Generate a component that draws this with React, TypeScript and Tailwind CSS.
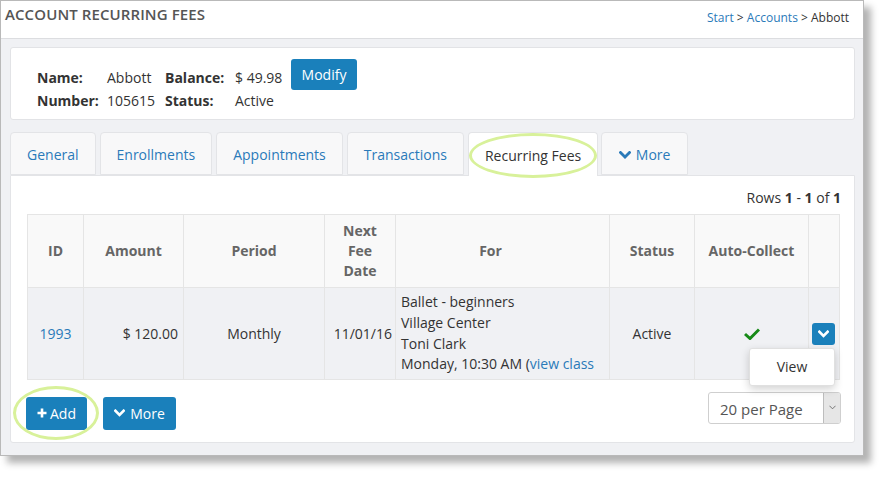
import React from "react";

const font = { fontFamily: '"Open Sans", "Liberation Sans", sans-serif' };

function Chevron({ className = "" }: { className?: string }) {
  return (
    <svg viewBox="0 0 12 8" className={className} fill="none">
      <path d="M1.5 1.5 L6 6 L10.5 1.5" stroke="currentColor" strokeWidth="2.8" strokeLinecap="square" />
    </svg>
  );
}

const tabs = ["General", "Enrollments", "Appointments", "Transactions", "Recurring Fees"];

export default function App() {
  return (
    <div className="w-[890px] h-[481px] bg-white text-[14px] text-[#333]" style={font}>
      <div className="w-[864px] h-[456px] border border-[#b9b9b9] flex flex-col shadow-[7px_7px_7px_rgba(0,0,0,0.3)]">
        {/* header */}
        <div className="h-[38px] shrink-0 flex items-start justify-between px-[4px] border-b border-[#dcdde0] bg-white">
          <div className="pt-[2px] text-[15px] font-semibold text-[#555] tracking-[0.1px]">ACCOUNT RECURRING FEES</div>
          <div className="pt-[8px] pr-[10px] text-[12px] text-[#333]">
            <span className="text-[#2a7ab9]">Start</span> &gt; <span className="text-[#2a7ab9]">Accounts</span> &gt; Abbott
          </div>
        </div>

        {/* body */}
        <div className="flex-1 bg-[#f0f1f4] pl-[9px] pr-[8px] pt-[8px] pb-[12px] flex flex-col">
          {/* info panel */}
          <div className="h-[73px] bg-white border border-[#e2e3e6] rounded-[3px] pl-[26px] pt-[11px]">
            <div className="grid grid-cols-[70px_58px_70px_56px_auto] items-center">
              <div className="font-bold pt-[5px]">Name:</div>
              <div className="pt-[5px]">Abbott</div>
              <div className="font-bold pt-[5px]">Balance:</div>
              <div className="pt-[5px]">$ 49.98</div>
              <div className="h-[31px] w-[66px] bg-[#1a80bb] rounded-[3px] text-white flex items-center justify-center">Modify</div>
              <div className="font-bold leading-[22px]">Number:</div>
              <div className="leading-[22px]">105615</div>
              <div className="font-bold leading-[22px]">Status:</div>
              <div className="leading-[22px]">Active</div>
            </div>
          </div>

          {/* tabs */}
          <div className="mt-[12px] h-[43px] flex gap-[4px] relative z-10">
            {tabs.map((t) => {
              const active = t === "Recurring Fees";
              return (
                <div
                  key={t}
                  className={
                    active
                      ? "relative h-[44px] px-[16px] pt-[1px] flex items-center bg-white border border-b-0 border-[#e3e4e7] rounded-t-[4px] text-[#333]"
                      : "h-[43px] px-[16px] pt-[2px] flex items-center bg-[#f8f8f9] border border-[#e3e4e7] rounded-t-[4px] text-[#2a7ab9]"
                  }
                >
                  {t}
                  {active && (
                    <div className="absolute left-[0px] top-[0px] w-[128px] h-[45px] rounded-[50%] border-[3px] border-[#d8f19a]" />
                  )}
                </div>
              );
            })}
            <div className="h-[43px] w-[87px] ml-[-1px] pt-[2px] flex items-center justify-center gap-[5px] bg-[#f8f8f9] border border-[#e3e4e7] rounded-t-[4px] text-[#2a7ab9]">
              <Chevron className="w-[12px] h-[8px]" />
              More
            </div>
          </div>

          {/* content */}
          <div className="flex-1 bg-white border border-[#e3e4e7] rounded-b-[3px] pl-[16px] pr-[13px] pt-[11px]">
            <div className="text-right h-[27px]">
              Rows <b>1</b> - <b>1</b> of <b>1</b>
            </div>
            <table className="w-[813px] border-collapse">
              <thead>
                <tr className="bg-[#f9f9f9] h-[73px] font-bold text-[#666] leading-[20px]">
                  <th className="w-[56px] border border-[#e5e5e5]">ID</th>
                  <th className="w-[100px] border border-[#e5e5e5]">Amount</th>
                  <th className="w-[141px] border border-[#e5e5e5]">Period</th>
                  <th className="w-[71px] border border-[#e5e5e5]">Next<br />Fee<br />Date</th>
                  <th className="w-[214px] pr-[24px] border border-[#e5e5e5]">For</th>
                  <th className="w-[85px] border border-[#e5e5e5]">Status</th>
                  <th className="w-[114px] border border-[#e5e5e5]">Auto-Collect</th>
                  <th className="border border-[#e5e5e5]"></th>
                </tr>
              </thead>
              <tbody>
                <tr className="bg-[#f0f1f4] h-[92px]">
                  <td className="text-center text-[#2a7ab9] border-x border-[#e5e5e5]">1993</td>
                  <td className="text-right pr-[5px] border-x border-[#e5e5e5]">$ 120.00</td>
                  <td className="text-center border-x border-[#e5e5e5]">Monthly</td>
                  <td className="text-right pr-[3px] border-x border-[#e5e5e5]">11/01/16</td>
                  <td className="pl-[5px] leading-[20.7px] border-x border-[#e5e5e5] whitespace-nowrap">
                    Ballet - beginners<br />Village Center<br />Toni Clark<br />
                    Monday, 10:30 AM (<span className="text-[#2a7ab9]">view class</span>
                  </td>
                  <td className="text-center border-x border-[#e5e5e5]">Active</td>
                  <td className="border-x border-[#e5e5e5]">
                    <div className="flex justify-center">
                      <svg viewBox="0 0 16 12" className="w-[16px] h-[12px]">
                        <path d="M1 6 L6 10.5 L15 1.5" stroke="#178a17" strokeWidth="3" fill="none" />
                      </svg>
                    </div>
                  </td>
                  <td className="border-x border-[#e5e5e5]">
                    <div className="relative flex justify-end pr-[4px]">
                      <div className="w-[23px] h-[22px] bg-[#1a80bb] rounded-[3px] flex items-center justify-center text-white">
                        <Chevron className="w-[11px] h-[8px]" />
                      </div>
                      <div className="absolute right-[4px] top-[25px] w-[86px] h-[38px] bg-white border border-[#e0e0e0] rounded-[3px] shadow-[0_3px_8px_rgba(0,0,0,0.18)] flex items-center justify-center z-20">
                        View
                      </div>
                    </div>
                  </td>
                </tr>
                <tr className="h-0 border-t border-[#e5e5e5]"></tr>
              </tbody>
            </table>

            <div className="mt-[12px] flex items-start justify-between">
              <div className="flex gap-[16px] pt-[5px]">
                <div className="relative h-[33px] w-[61px] -ml-[1px] bg-[#1a80bb] rounded-[3px] text-white flex items-center justify-center gap-[3px]">
                  <svg viewBox="0 0 10 10" className="w-[10px] h-[10px]">
                    <path d="M5 0.5 V9.5 M0.5 5 H9.5" stroke="white" strokeWidth="2.6" />
                  </svg>
                  Add
                  <div className="absolute left-[-13px] top-[-11px] w-[86px] h-[54px] rounded-[50%] border-[3px] border-[#d8f19a]" />
                </div>
                <div className="h-[33px] w-[73px] bg-[#1a80bb] rounded-[3px] text-white flex items-center justify-center gap-[5px]">
                  <Chevron className="w-[11px] h-[8px]" />
                  More
                </div>
              </div>
              <div className="h-[32px] w-[133px] border border-[#cfcfcf] rounded-[3px] flex overflow-hidden">
                <div className="flex-1 flex items-center pl-[11px] pt-[3px] text-[15px] text-[#555]">20 per Page</div>
                <div className="w-[17px] bg-[#e6e6e6] border-l border-[#bdbdbd] flex items-center justify-center text-[#666]">
                  <svg viewBox="0 0 8 5" className="w-[7px] h-[5px]">
                    <path d="M0.5 0.5 L4 4 L7.5 0.5" stroke="currentColor" strokeWidth="1" fill="none" />
                  </svg>
                </div>
              </div>
            </div>
          </div>
        </div>
      </div>
    </div>
  );
}
